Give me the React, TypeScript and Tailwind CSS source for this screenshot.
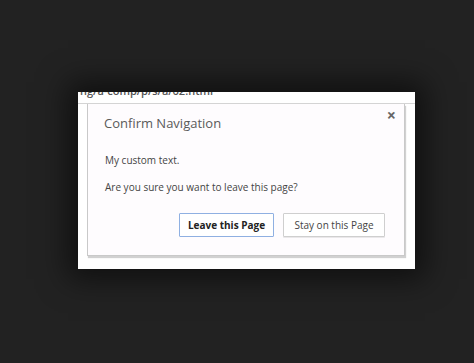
import React from 'react';

const font = { fontFamily: '"Open Sans", "Noto Sans", Arial, sans-serif' };

export default function App() {
  return (
    <div className="w-[474px] h-[363px] bg-[#222222] flex" style={font}>
      <div className="ml-[78px] mt-[92px] w-[337px] h-[177px] bg-white overflow-hidden flex flex-col shadow-[0_0_28px_10px_rgba(0,0,0,0.55)]">
        {/* page url, mostly scrolled off */}
        <div className="h-[12px] shrink-0 overflow-hidden border-b border-[#d4d4d4]">
          <div className="pl-[2px] text-[11px] leading-[12px] font-semibold text-[#555] -translate-y-[7px] whitespace-nowrap">
            ng/a-comp/p/s/a/62.html
          </div>
        </div>

        {/* dialog */}
        <div className="ml-[9px] w-[318px] h-[152px] bg-[#fefcfe] border-x border-b border-[#c9c9c9] shadow-[1px_2px_1px_rgba(0,0,0,0.18)] flex flex-col">
          <div className="flex items-start justify-between pl-[16px] pr-[8px]">
            <h1 className="mt-[9px] text-[13px] text-[#5a5a5a] leading-[20px]">Confirm Navigation</h1>
            <span className="mt-[4px] text-[16px] font-bold text-[#666] leading-[14px]">×</span>
          </div>

          <p className="mt-[20px] pl-[17px] text-[10px] text-[#444] leading-[14px]">My custom text.</p>
          <p className="mt-[13px] pl-[17px] text-[10px] text-[#444] leading-[14px]">
            Are you sure you want to leave this page?
          </p>

          <div className="mt-[19px] flex justify-end gap-[9px] pr-[19px]">
            <button className="w-[95px] h-[24px] border border-[#8fb0e2] bg-white text-[10px] font-bold text-[#222] rounded-[1px]">
              Leave this Page
            </button>
            <button className="w-[102px] h-[24px] border border-[#cfcfcf] bg-white text-[10px] text-[#444] rounded-[1px] shadow-[0_1px_0_rgba(0,0,0,0.08)]">
              Stay on this Page
            </button>
          </div>
        </div>
      </div>
    </div>
  );
}
